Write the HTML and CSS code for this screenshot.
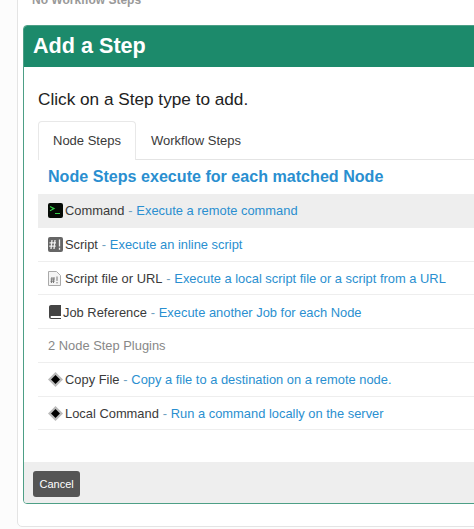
FILE: index.html
```html
<!DOCTYPE html>
<html lang="en">
<head>
    <meta charset="UTF-8">
    <title>Add a Step</title>
    <link rel="stylesheet" href="styles.css">
</head>
<body>
    <div class="page-card">
        <div class="empty-note">No Workflow Steps</div>

        <div class="panel">
            <div class="panel-heading">Add a Step</div>

            <div class="panel-body">
                <div class="lead">Click on a Step type to add.</div>

                <div class="tabs">
                    <div class="tab active">Node Steps</div>
                    <div class="tab">Workflow Steps</div>
                </div>

                <div class="tab-title">Node Steps execute for each matched Node</div>

                <div class="step-list">
                    <div class="step hover">
                        <svg class="icon" viewBox="0 0 15 15">
                            <rect width="15" height="15" rx="2" fill="#050a05"/>
                            <path d="M2 3.5 6 5.6 2 7.7" fill="none" stroke="#35d04a" stroke-width="1.2"/>
                            <path d="M7 10.5h5" stroke="#35d04a" stroke-width="1.2"/>
                        </svg>
                        <span>Command</span><span class="dash">-</span><a>Execute a remote command</a>
                    </div>
                    <div class="step">
                        <svg class="icon" viewBox="0 0 15 15">
                            <rect width="15" height="15" rx="2" fill="#666"/>
                            <path d="M4 3 3 12M7 3 6 12M1.5 5.8h6.5M1.2 9.2h6.5M11.5 2.5v7M11.5 10.8v2" fill="none" stroke="#eee" stroke-width="1.3"/>
                        </svg>
                        <span>Script</span><span class="dash">-</span><a>Execute an inline script</a>
                    </div>
                    <div class="step">
                        <svg class="icon file" viewBox="0 0 13 15">
                            <path d="M.5.5h8l4 4v10H.5z" fill="#f4f4f4" stroke="#aaa"/>
                            <path d="M4 6 3.4 12M6 6 5.4 12M2.6 8h4.2M2.4 10.2h4.2M9 5.5v4.4M9 11v1.4" fill="none" stroke="#777"/>
                        </svg>
                        <span>Script file or URL</span><span class="dash">-</span><a>Execute a local script file or a script from a URL</a>
                    </div>
                    <div class="step">
                        <svg class="icon book" viewBox="0 0 12 14">
                            <path d="M2 0h10v11H2.6C2 11 1.6 11.4 1.6 12s.4 1 1 1H12v1H2.4C1 14 0 13 0 11.7V2C0 .9.9 0 2 0z" fill="#444"/>
                        </svg>
                        <span>Job Reference</span><span class="dash">-</span><a>Execute another Job for each Node</a>
                    </div>
                    <div class="step muted">2 Node Step Plugins</div>
                    <div class="step">
                        <svg class="icon" viewBox="0 0 15 15">
                            <path d="M7.5 0 15 7.5 7.5 15 0 7.5z" fill="#bbb"/>
                            <path d="M7.5 3 12 7.5 7.5 12 3 7.5z" fill="#000"/>
                        </svg>
                        <span>Copy File</span><span class="dash">-</span><a>Copy a file to a destination on a remote node.</a>
                    </div>
                    <div class="step">
                        <svg class="icon" viewBox="0 0 15 15">
                            <path d="M7.5 0 15 7.5 7.5 15 0 7.5z" fill="#bbb"/>
                            <path d="M7.5 3 12 7.5 7.5 12 3 7.5z" fill="#000"/>
                        </svg>
                        <span>Local Command</span><span class="dash">-</span><a>Run a command locally on the server</a>
                    </div>
                </div>
            </div>

            <div class="panel-footer">
                <button class="btn-cancel">Cancel</button>
            </div>
        </div>
    </div>
</body>
</html>
```

FILE: styles.css
```css
html, body {
    overflow: hidden;
}

body {
    margin: 0;
    height: 529px;
    background: #fcfcfc;
    color: #3a3a3a;
    font-family: "Liberation Sans", Arial, sans-serif;
    font-size: 13px;
}

.page-card {
    width: 620px;
    height: 538px;
    margin: -11px 0 0 17px;
    padding: 0 0 0 5px;
    box-sizing: border-box;
    background: #fff;
    border: 1px solid #e4e4e4;
    border-radius: 5px;
}

.empty-note {
    height: 35px;
    padding: 3px 0 0 9px;
    box-sizing: border-box;
    color: #999;
    font-size: 12px;
    font-weight: bold;
}

.panel {
    width: 600px;
    height: 479px;
    display: flex;
    flex-direction: column;
    box-sizing: border-box;
    border: 1px solid #4d9f86;
    border-radius: 4px;
    overflow: hidden;
}

.panel-heading {
    height: 41px;
    padding-left: 9px;
    flex-shrink: 0;
    background: #1c8a6b;
    color: #fff;
    font-size: 21.6px;
    font-weight: bold;
    line-height: 40px;
}

.panel-body {
    flex: 1;
    padding: 21px 0 0 14px;
}

.lead {
    height: 23px;
    color: #222;
    font-size: 17.2px;
    line-height: 22px;
}

.tabs {
    display: flex;
    height: 38px;
    margin-top: 10px;
    border-bottom: 1px solid #e4e4e4;
}

.tab {
    padding: 0 14px;
    border: 1px solid transparent;
    border-bottom: 0;
    line-height: 37px;
}

.tab.active {
    height: 38px;
    background: #fff;
    border-color: #e8e8e8;
    border-radius: 4px 4px 0 0;
}

.tab-title {
    height: 34px;
    padding-left: 10px;
    color: #2a8fd0;
    font-size: 16.1px;
    font-weight: bold;
    line-height: 32px;
}

.step {
    display: flex;
    align-items: center;
    height: 33.75px;
    padding: 1px 0 0 10px;
    box-sizing: border-box;
    border-bottom: 1px solid #eee;
    font-size: 12.9px;
}

.step.hover {
    background: #eee;
}

.step.muted {
    color: #888;
}

.dash {
    margin: 0 3.8px;
    color: #6f9fc0;
}

.step a {
    color: #2a8fd0;
}

.icon {
    width: 15px;
    height: 15px;
    margin-right: 2px;
}

.icon.file {
    width: 13px;
    margin: 0 4px 0 0;
}

.icon.book {
    width: 12px;
    height: 14px;
    margin: 0 2px 0 1px;
}

.panel-footer {
    height: 41px;
    padding: 9px;
    flex-shrink: 0;
    box-sizing: border-box;
    background: #eee;
}

.btn-cancel {
    display: block;
    height: 26px;
    padding: 0 6.5px;
    background: #555;
    border: 0;
    border-radius: 3px;
    color: #fff;
    font-family: inherit;
    font-size: 11px;
}
```
